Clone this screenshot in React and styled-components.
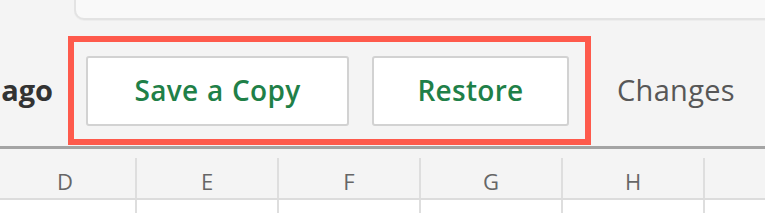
import React from "react";
import styled, { createGlobalStyle } from "styled-components";

const Global = createGlobalStyle`
  html, body {
    margin: 0;
    padding: 0;
    background: #f4f4f4;
    overflow: hidden;
    font-family: "Open Sans", "Noto Sans", sans-serif;
  }
  #root { width: 765px; height: 213px; overflow: hidden; }
`;

const Page = styled.div`
  display: flex;
  flex-direction: column;
  width: 765px;
  height: 213px;
  overflow: hidden;
`;

const InfoCard = styled.div`
  box-sizing: border-box;
  margin: -30px -20px 0 74px;
  height: 50px;
  background: #f9f9f9;
  border: 2px solid #e3e3e3;
  border-top: none;
  border-radius: 0 0 0 10px;
  box-shadow: 0 1px 1px rgba(0, 0, 0, 0.03);
`;

const Toolbar = styled.div`
  display: flex;
  align-items: flex-start;
  padding: 16px 0 1px 0;
  border-bottom: 3px solid #a4a4a4;
`;

const Meta = styled.div`
  box-sizing: border-box;
  width: 68px;
  height: 109px;
  padding-right: 15px;
  display: flex;
  justify-content: flex-end;
  align-items: center;
  overflow: hidden;
  white-space: nowrap;
  font-size: 29px;
  font-weight: 700;
  color: #333333;
  padding-bottom: 3px;
`;

const Highlight = styled.div`
  box-sizing: border-box;
  width: 523px;
  height: 109px;
  display: flex;
  gap: 23px;
  padding: 14px 16px 13px 12px;
  border: 6px solid #fe5a4c;
`;

const ActionButton = styled.button`
  box-sizing: border-box;
  width: ${(p) => p.$w}px;
  height: 70px;
  display: flex;
  align-items: center;
  justify-content: center;
  background: #ffffff;
  border: 2px solid #d2d2d2;
  border-radius: 3px;
  font-family: "Open Sans", "Noto Sans", sans-serif;
  font-size: 28px;
  letter-spacing: 0.3px;
  word-spacing: 1px;
  font-weight: 600;
  color: #1f8048;
  padding: 0 0 3px 0;
  cursor: pointer;
`;

const LinkLabel = styled.div`
  height: 109px;
  display: flex;
  align-items: center;
  margin-left: 26px;
  font-size: 29px;
  letter-spacing: 0.3px;
  font-weight: 400;
  color: #575757;
  white-space: nowrap;
  padding-bottom: 3px;
  box-sizing: border-box;
`;

const HeaderRow = styled.div`
  display: flex;
  margin-left: -5px;
  padding-top: 9px;
  border-bottom: 2px solid #dcdcdc;
`;

const HeaderCell = styled.div`
  box-sizing: border-box;
  flex: 0 0 142px;
  height: 40px;
  display: flex;
  align-items: center;
  justify-content: center;
  padding-top: 5px;
  border-right: 2px solid #dedede;
  font-family: "Open Sans", "Noto Sans", sans-serif;
  font-size: 22px;
  color: #666666;
`;

const GridRow = styled.div`
  display: flex;
  margin-left: -5px;
  background: #ffffff;
  flex: 1;
`;

const GridCell = styled.div`
  box-sizing: border-box;
  flex: 0 0 142px;
  border-right: 2px solid #dedede;
  background: #ffffff;
`;

const columns = ["D", "E", "F", "G", "H", "I"];

export default function App() {
  return (
    <>
      <Global />
      <Page>
        <InfoCard />
        <Toolbar>
          <Meta>ago</Meta>
          <Highlight>
            <ActionButton $w={263}>Save a Copy</ActionButton>
            <ActionButton $w={197}>Restore</ActionButton>
          </Highlight>
          <LinkLabel>Changes</LinkLabel>
        </Toolbar>
        <HeaderRow>
          {columns.map((c) => (
            <HeaderCell key={c}>{c === "I" ? "" : c}</HeaderCell>
          ))}
        </HeaderRow>
        <GridRow>
          {columns.map((c) => (
            <GridCell key={c} />
          ))}
        </GridRow>
      </Page>
    </>
  );
}
